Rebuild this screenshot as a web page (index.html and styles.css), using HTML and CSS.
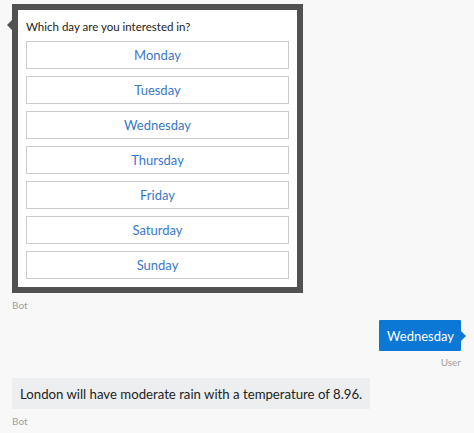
FILE: index.html
```html
<!DOCTYPE html>
<html>
<head>
<meta charset="utf-8">
<link rel="stylesheet" href="styles.css">
</head>
<body>
<div class="chat">
  <div class="msg bot">
    <div class="card callout-left">
      <div class="title">Which day are you interested in?</div>
      <div class="buttons">
        <div class="btn">Monday</div>
        <div class="btn">Tuesday</div>
        <div class="btn">Wednesday</div>
        <div class="btn">Thursday</div>
        <div class="btn">Friday</div>
        <div class="btn">Saturday</div>
        <div class="btn">Sunday</div>
      </div>
    </div>
    <div class="from">Bot</div>
  </div>
  <div class="msg user">
    <div class="bubble-user">Wednesday</div>
    <div class="from">User</div>
  </div>
  <div class="msg bot last">
    <div class="bubble-bot">London will have moderate rain with a temperature of 8.96.</div>
    <div class="from">Bot</div>
  </div>
</div>
</body>
</html>
```
FILE: styles.css
```css
html, body {
  margin: 0;
  padding: 0;
}
body {
  background: #f8f8f8;
  font-family: "Lato", "Open Sans", sans-serif;
  width: 474px;
  height: 433px;
  overflow: hidden;
}
.chat {
  display: flex;
  flex-direction: column;
  padding: 4px 12px 0 12px;
}
.msg {
  display: flex;
  flex-direction: column;
}
.msg.bot {
  align-items: flex-start;
}
.card {
  position: relative;
  width: 291px;
  box-sizing: border-box;
  border: 6px solid #515151;
  background: #fff;
  padding: 8px 8px 8px 8px;
}
.callout-left::before {
  content: "";
  position: absolute;
  left: -11px;
  top: 10px;
  border-style: solid;
  border-width: 5px 5px 5px 0;
  border-color: transparent #515151 transparent transparent;
}
.title {
  font-size: 11.5px;
  color: #222;
  line-height: 18px;
  margin-bottom: 5px;
}
.buttons {
  display: flex;
  flex-direction: column;
  gap: 7px;
}
.btn {
  height: 28px;
  box-sizing: border-box;
  border: 1px solid #cccccc;
  display: flex;
  align-items: center;
  justify-content: center;
  color: #3a78c9;
  font-size: 13px;
}
.from {
  font-size: 10px;
  color: #a0a0a0;
  line-height: 14px;
  margin-top: 5px;
}
.msg.user {
  margin-top: 8px;
  margin-right: 1px;
  align-items: flex-end;
}
.bubble-user {
  position: relative;
  background: #0a78d4;
  color: #fff;
  font-size: 13px;
  height: 31px;
  display: flex;
  align-items: center;
  padding: 0 7px 0 8px;
  border-radius: 1px;
}
.bubble-user::after {
  content: "";
  position: absolute;
  right: -5px;
  top: 11px;
  border-style: solid;
  border-width: 5px 0 5px 5px;
  border-color: transparent transparent transparent #0a78d4;
}
.msg.user .from {
  margin-top: 4px;
}
.msg.last {
  margin-top: 9px;
}
.bubble-bot {
  background: #eceef0;
  color: #222;
  font-size: 13.2px;
  height: 31px;
  display: flex;
  align-items: center;
  padding: 0 8px;
  border-radius: 1px;
}
.msg.last .from {
  margin-top: 5px;
}
```
